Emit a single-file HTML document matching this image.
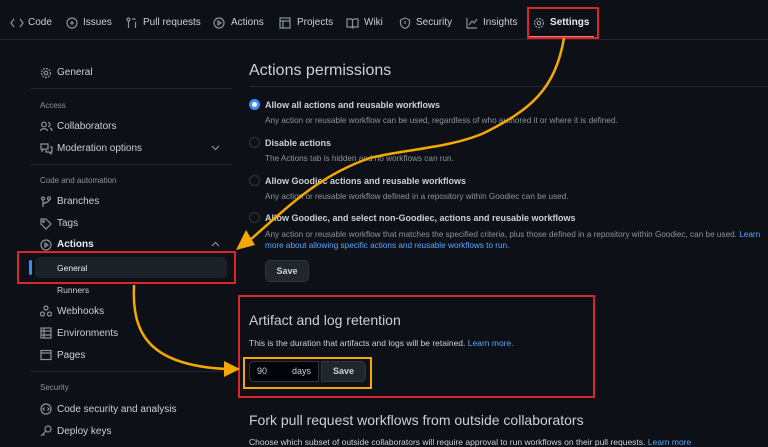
<!DOCTYPE html>
<html><head><meta charset="utf-8"><style>
*{margin:0;padding:0;box-sizing:border-box}
body{width:768px;height:447px;overflow:hidden;background:#0d1117;font-family:"Liberation Sans",sans-serif;color:#c9d1d9;position:relative}
.a{position:absolute;white-space:nowrap}
.nav{font-size:10px;color:#c9d1d9;top:17px}
.ic{position:absolute;stroke:#8b949e;fill:none;stroke-width:1.2}
.sb{font-size:10px;color:#c9d1d9}
.sh{font-size:8px;color:#8b949e}
.hr{position:absolute;height:1px;background:#21262d}
.t{font-size:9px;font-weight:bold;color:#c9d1d9}
.d{font-size:8.2px;color:#8b949e}
.rad{position:absolute;width:11px;height:11px;border-radius:50%;border:1px solid #30363d}
.btn{position:absolute;background:#21262d;border:1px solid #30363d;border-radius:5px;font-size:9px;font-weight:bold;color:#c9d1d9;text-align:center}
.h{font-size:16px;color:#c9d1d9}
.lk{color:#58a6ff}
.red{position:absolute;border:2px solid #d9262d}
</style></head><body>
<div class="hr" style="left:0;top:39px;width:768px"></div>
<svg class="ic" style="left:10px;top:17px" width="14" height="12"><path d="M4 2L1 6l3 4M10 2l3 4-3 4"/></svg>
<div class="a nav" style="left:28px">Code</div>
<svg class="ic" style="left:66px;top:17px" width="12" height="12"><circle cx="6" cy="6" r="5"/><circle cx="6" cy="6" r="1"/></svg>
<div class="a nav" style="left:83px">Issues</div>
<svg class="ic" style="left:126px;top:17px" width="12" height="12"><circle cx="2.5" cy="2.5" r="1.5"/><path d="M2.5 4v7M9.5 5v6M9.5 2H6"/></svg>
<div class="a nav" style="left:143px">Pull requests</div>
<svg class="ic" style="left:213px;top:17px" width="12" height="12"><circle cx="6" cy="6" r="5"/><path d="M5 4v4l3-2z"/></svg>
<div class="a nav" style="left:231px">Actions</div>
<svg class="ic" style="left:279px;top:17px" width="12" height="12"><rect x="1" y="1" width="10" height="10"/><path d="M1 4h10M4 4v7"/></svg>
<div class="a nav" style="left:297px">Projects</div>
<svg class="ic" style="left:346px;top:17px" width="13" height="12"><path d="M1 2h4l1.5 1 1.5-1h4v8H8l-1.5 1L5 10H1zM6.5 3v8"/></svg>
<div class="a nav" style="left:364px">Wiki</div>
<svg class="ic" style="left:399px;top:17px" width="12" height="12"><path d="M6 1l4.5 2v3c0 3-2 4.5-4.5 5.5C3.5 10.5 1.5 9 1.5 6V3z"/><path d="M6 4v3"/></svg>
<div class="a nav" style="left:416px">Security</div>
<svg class="ic" style="left:466px;top:17px" width="12" height="12"><path d="M1 1v10h10M3 8l3-4 2 2 3-4"/></svg>
<div class="a nav" style="left:483px">Insights</div>
<svg class="ic" style="left:533px;top:17px" width="12" height="12"><circle cx="6" cy="6" r="4.5" stroke-dasharray="2 1"/><circle cx="6" cy="6" r="1.8"/></svg>
<div class="a nav" style="left:550px;font-weight:bold;color:#e6edf3">Settings</div>
<div class="a" style="left:528px;top:36px;width:66px;height:2px;background:#f78166"></div>
<div class="red" style="left:527px;top:7px;width:72px;height:32px"></div>

<!-- sidebar -->
<svg class="ic" style="left:40px;top:67px" width="12" height="12"><circle cx="6" cy="6" r="4.5" stroke-dasharray="2 1"/><circle cx="6" cy="6" r="1.8"/></svg>
<div class="a sb" style="left:57px;top:67px">General</div>
<div class="hr" style="left:30px;top:88px;width:202px"></div>
<div class="a sh" style="left:40px;top:101px">Access</div>
<svg class="ic" style="left:40px;top:121px" width="13" height="11"><circle cx="4" cy="3.5" r="2.3"/><path d="M0.5 10c0-3 7-3 7 0M8 1.5a2 2 0 010 4M10 7c1.5.5 2 2 2 3"/></svg>
<div class="a sb" style="left:57px;top:121px">Collaborators</div>
<svg class="ic" style="left:40px;top:143px" width="13" height="12"><path d="M1 1h7v5H4L2 8V6H1zM10 4h2v5h-1v2l-2-2H6V7"/></svg>
<div class="a sb" style="left:57px;top:143px">Moderation options</div>
<svg class="ic" style="left:211px;top:145px" width="9" height="6"><path d="M1 1l3.5 3.5L8 1"/></svg>
<div class="hr" style="left:30px;top:164px;width:202px"></div>
<div class="a sh" style="left:40px;top:176px">Code and automation</div>
<svg class="ic" style="left:40px;top:196px" width="12" height="12"><circle cx="3" cy="2.5" r="1.5"/><circle cx="9" cy="2.5" r="1.5"/><path d="M3 4v7M9 4c0 3-6 2-6 5"/></svg>
<div class="a sb" style="left:57px;top:196px">Branches</div>
<svg class="ic" style="left:40px;top:218px" width="12" height="12"><path d="M1 1h5l5 5-5 5-5-5z"/><circle cx="3.5" cy="3.5" r=".8"/></svg>
<div class="a sb" style="left:57px;top:218px">Tags</div>
<svg class="ic" style="left:40px;top:239px" width="12" height="12"><circle cx="6" cy="6" r="5"/><path d="M5 4v4l3-2z"/></svg>
<div class="a sb" style="left:57px;top:239px;font-weight:bold;color:#e6edf3">Actions</div>
<svg class="ic" style="left:211px;top:241px" width="9" height="6"><path d="M1 5l3.5-3.5L8 5"/></svg>
<div class="a" style="left:35px;top:257px;width:192px;height:21px;background:#1c2128;border-radius:5px"></div>
<div class="a" style="left:29px;top:260px;width:3px;height:15px;background:#388bfd;border-radius:2px"></div>
<div class="a" style="left:57px;top:263px;font-size:8.5px;color:#e6edf3">General</div>
<div class="red" style="left:17px;top:251px;width:219px;height:33px"></div>
<div class="a" style="left:57px;top:285px;font-size:8.5px;color:#c9d1d9">Runners</div>
<svg class="ic" style="left:40px;top:305px" width="12" height="12"><circle cx="6" cy="3" r="2"/><circle cx="2.5" cy="9" r="2"/><circle cx="9.5" cy="9" r="2"/></svg>
<div class="a sb" style="left:57px;top:306px">Webhooks</div>
<svg class="ic" style="left:40px;top:327px" width="12" height="12"><rect x="1" y="1" width="10" height="10"/><path d="M1 4h10M1 8h10M4 1v10"/></svg>
<div class="a sb" style="left:57px;top:328px">Environments</div>
<svg class="ic" style="left:40px;top:349px" width="12" height="12"><rect x="1" y="1.5" width="10" height="9"/><path d="M1 4h10"/></svg>
<div class="a sb" style="left:57px;top:350px">Pages</div>
<div class="hr" style="left:30px;top:371px;width:202px"></div>
<div class="a sh" style="left:40px;top:383px">Security</div>
<svg class="ic" style="left:40px;top:403px" width="12" height="12"><circle cx="6" cy="6" r="5"/><path d="M4.5 4.5L3 6l1.5 1.5M7.5 4.5L9 6 7.5 7.5"/></svg>
<div class="a sb" style="left:57px;top:404px">Code security and analysis</div>
<svg class="ic" style="left:40px;top:425px" width="12" height="12"><circle cx="8" cy="4" r="3"/><path d="M6 6L1 11M3 9l1.5 1.5"/></svg>
<div class="a sb" style="left:57px;top:426px">Deploy keys</div>

<!-- main -->
<div class="a h" style="left:249px;top:62px">Actions permissions</div>
<div class="hr" style="left:249px;top:86px;width:519px"></div>
<div class="rad" style="left:249px;top:99px;border:3px solid #388bfd;background:#fff"></div>
<div class="a t" style="left:265px;top:100px">Allow all actions and reusable workflows</div>
<div class="a d" style="left:265px;top:116px">Any action or reusable workflow can be used, regardless of who authored it or where it is defined.</div>
<div class="rad" style="left:249px;top:137px"></div>
<div class="a t" style="left:265px;top:138px">Disable actions</div>
<div class="a d" style="left:265px;top:154px">The Actions tab is hidden and no workflows can run.</div>
<div class="rad" style="left:249px;top:175px"></div>
<div class="a t" style="left:265px;top:176px">Allow Goodiec actions and reusable workflows</div>
<div class="a d" style="left:265px;top:192px">Any action or reusable workflow defined in a repository within Goodiec can be used.</div>
<div class="rad" style="left:249px;top:212px"></div>
<div class="a t" style="left:265px;top:213px">Allow Goodiec, and select non-Goodiec, actions and reusable workflows</div>
<div class="a d" style="left:265px;top:230px">Any action or reusable workflow that matches the specified criteria, plus those defined in a repository within Goodiec, can be used. <span class="lk">Learn</span></div>
<div class="a d lk" style="left:265px;top:241px">more about allowing specific actions and reusable workflows to run.</div>
<div class="btn" style="left:265px;top:260px;width:44px;height:22px;line-height:20px">Save</div>

<div class="red" style="left:238px;top:295px;width:357px;height:103px"></div>
<div class="a" style="left:249px;top:312px;font-size:14px;color:#c9d1d9">Artifact and log retention</div>
<div class="a" style="left:249px;top:338px;font-size:8.5px;color:#c9d1d9">This is the duration that artifacts and logs will be retained. <span class="lk">Learn more.</span></div>
<div class="a" style="left:249px;top:361px;width:70px;height:21px;background:#010409;border:1px solid #30363d;border-radius:5px 0 0 5px"></div>
<div class="a" style="left:257px;top:366px;font-size:9px">90</div>
<div class="a" style="left:292px;top:366px;font-size:9px">days</div>
<div class="btn" style="left:321px;top:361px;width:45px;height:21px;line-height:19px;border-radius:0 5px 5px 0">Save</div>
<div class="a" style="left:243px;top:357px;width:129px;height:32px;border:2px solid #f5a800"></div>

<div class="a" style="left:249px;top:412px;font-size:14px;color:#c9d1d9">Fork pull request workflows from outside collaborators</div>
<div class="a" style="left:249px;top:437px;font-size:8.5px;color:#c9d1d9">Choose which subset of outside collaborators will require approval to run workflows on their pull requests. <span class="lk">Learn more</span></div>

<svg class="a" style="left:0;top:0" width="768" height="447" fill="none">
<path d="M564 38C555 90 530 110 484 133C450 148 400 150 370 158C320 175 290 205 250 240" stroke="#f5a800" stroke-width="2.5"/>
<path d="M236 250L246 230L255 245Z" fill="#f5a800"/>
<path d="M134 285C132 330 145 365 226 369" stroke="#f5a800" stroke-width="2.5"/>
<path d="M240 369L224 361L224 377Z" fill="#f5a800"/>
</svg>
</body></html>
